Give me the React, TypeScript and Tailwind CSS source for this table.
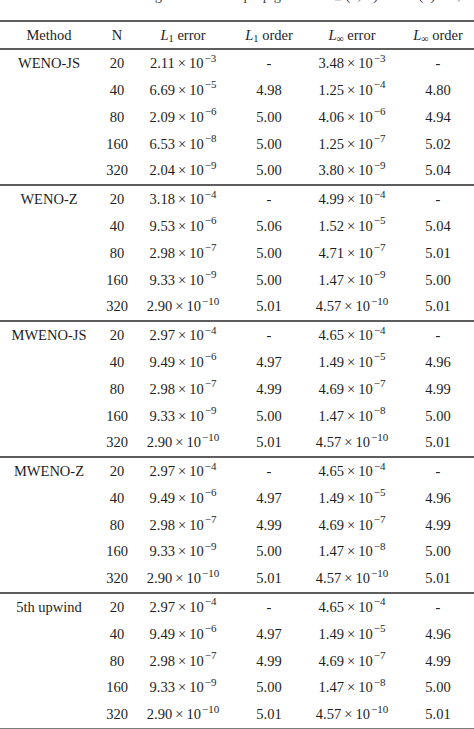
import React from "react";

type Row = { n: string; e1: [string, string]; o1: string; ei: [string, string]; oi: string };
type Group = { method: string; rows: Row[] };

const groups: Group[] = [
  {
    method: "WENO-JS",
    rows: [
      { n: "20", e1: ["2.11", "3"], o1: "-", ei: ["3.48", "3"], oi: "-" },
      { n: "40", e1: ["6.69", "5"], o1: "4.98", ei: ["1.25", "4"], oi: "4.80" },
      { n: "80", e1: ["2.09", "6"], o1: "5.00", ei: ["4.06", "6"], oi: "4.94" },
      { n: "160", e1: ["6.53", "8"], o1: "5.00", ei: ["1.25", "7"], oi: "5.02" },
      { n: "320", e1: ["2.04", "9"], o1: "5.00", ei: ["3.80", "9"], oi: "5.04" },
    ],
  },
  {
    method: "WENO-Z",
    rows: [
      { n: "20", e1: ["3.18", "4"], o1: "-", ei: ["4.99", "4"], oi: "-" },
      { n: "40", e1: ["9.53", "6"], o1: "5.06", ei: ["1.52", "5"], oi: "5.04" },
      { n: "80", e1: ["2.98", "7"], o1: "5.00", ei: ["4.71", "7"], oi: "5.01" },
      { n: "160", e1: ["9.33", "9"], o1: "5.00", ei: ["1.47", "9"], oi: "5.00" },
      { n: "320", e1: ["2.90", "10"], o1: "5.01", ei: ["4.57", "10"], oi: "5.01" },
    ],
  },
  {
    method: "MWENO-JS",
    rows: [
      { n: "20", e1: ["2.97", "4"], o1: "-", ei: ["4.65", "4"], oi: "-" },
      { n: "40", e1: ["9.49", "6"], o1: "4.97", ei: ["1.49", "5"], oi: "4.96" },
      { n: "80", e1: ["2.98", "7"], o1: "4.99", ei: ["4.69", "7"], oi: "4.99" },
      { n: "160", e1: ["9.33", "9"], o1: "5.00", ei: ["1.47", "8"], oi: "5.00" },
      { n: "320", e1: ["2.90", "10"], o1: "5.01", ei: ["4.57", "10"], oi: "5.01" },
    ],
  },
  {
    method: "MWENO-Z",
    rows: [
      { n: "20", e1: ["2.97", "4"], o1: "-", ei: ["4.65", "4"], oi: "-" },
      { n: "40", e1: ["9.49", "6"], o1: "4.97", ei: ["1.49", "5"], oi: "4.96" },
      { n: "80", e1: ["2.98", "7"], o1: "4.99", ei: ["4.69", "7"], oi: "4.99" },
      { n: "160", e1: ["9.33", "9"], o1: "5.00", ei: ["1.47", "8"], oi: "5.00" },
      { n: "320", e1: ["2.90", "10"], o1: "5.01", ei: ["4.57", "10"], oi: "5.01" },
    ],
  },
  {
    method: "5th upwind",
    rows: [
      { n: "20", e1: ["2.97", "4"], o1: "-", ei: ["4.65", "4"], oi: "-" },
      { n: "40", e1: ["9.49", "6"], o1: "4.97", ei: ["1.49", "5"], oi: "4.96" },
      { n: "80", e1: ["2.98", "7"], o1: "4.99", ei: ["4.69", "7"], oi: "4.99" },
      { n: "160", e1: ["9.33", "9"], o1: "5.00", ei: ["1.47", "8"], oi: "5.00" },
      { n: "320", e1: ["2.90", "10"], o1: "5.01", ei: ["4.57", "10"], oi: "5.01" },
    ],
  },
];

function Sci({ m, e }: { m: string; e: string }) {
  return (
    <span className="whitespace-nowrap">
      {m}
      <span className="mx-[3px]">×</span>
      10
      <sup className="text-[11px] -top-[0.6em] ml-[1px]">−{e}</sup>
    </span>
  );
}

const cols = "grid grid-cols-[98px_38px_94px_78px_88px_78px]";

function Rule({ h = "h-[2px]", c = "bg-[#5e5e5e]" }: { h?: string; c?: string }) {
  return <div className={`${h} ${c} w-full`} />;
}

export default function App() {
  return (
    <div
      className="w-[474px] h-[729px] overflow-hidden bg-white text-[#1e1e1e] text-[14.5px]"
      style={{ fontFamily: '"Liberation Serif", "Times New Roman", serif' }}
    >
      {/* clipped caption line from above */}
      <div className="h-[8px] overflow-hidden">
        <div className="-mt-[13px] leading-[16px] whitespace-nowrap flex text-[#444]">
          <span className="w-[162px] shrink-0 text-right">for all schemes using</span>
          <span className="w-[135px] shrink-0 text-right">on a step-up grid</span>
          <span className="shrink-0">&nbsp;for t ∈ (0, T) with u(x) at t,</span>
        </div>
      </div>
      <div className="h-[12px]" />
      <Rule />
      <div className={`${cols} h-[26px] items-center text-center leading-none`}>
        <div>Method</div>
        <div>N</div>
        <div>
          <i>L</i>
          <sub className="text-[10.5px]">1</sub> error
        </div>
        <div>
          <i>L</i>
          <sub className="text-[10.5px]">1</sub> order
        </div>
        <div>
          <i>L</i>
          <sub className="text-[10px]">∞</sub> error
        </div>
        <div className="pl-[6px]">
          <i>L</i>
          <sub className="text-[10px]">∞</sub> order
        </div>
      </div>
      <Rule />
      {groups.map((g, gi) => (
        <div key={gi}>
          {g.rows.map((r, ri) => (
            <div key={ri} className={`${cols} h-[26.8px] items-center text-center leading-none`}>
              <div>{ri === 0 ? g.method : ""}</div>
              <div>{r.n}</div>
              <div>
                <Sci m={r.e1[0]} e={r.e1[1]} />
              </div>
              <div>{r.o1}</div>
              <div>
                <Sci m={r.ei[0]} e={r.ei[1]} />
              </div>
              <div className="pl-[6px]">{r.oi}</div>
            </div>
          ))}
          {gi < groups.length - 1 ? <Rule /> : <Rule h="h-[3px]" c="bg-[#7a7a7a]" />}
        </div>
      ))}
    </div>
  );
}
